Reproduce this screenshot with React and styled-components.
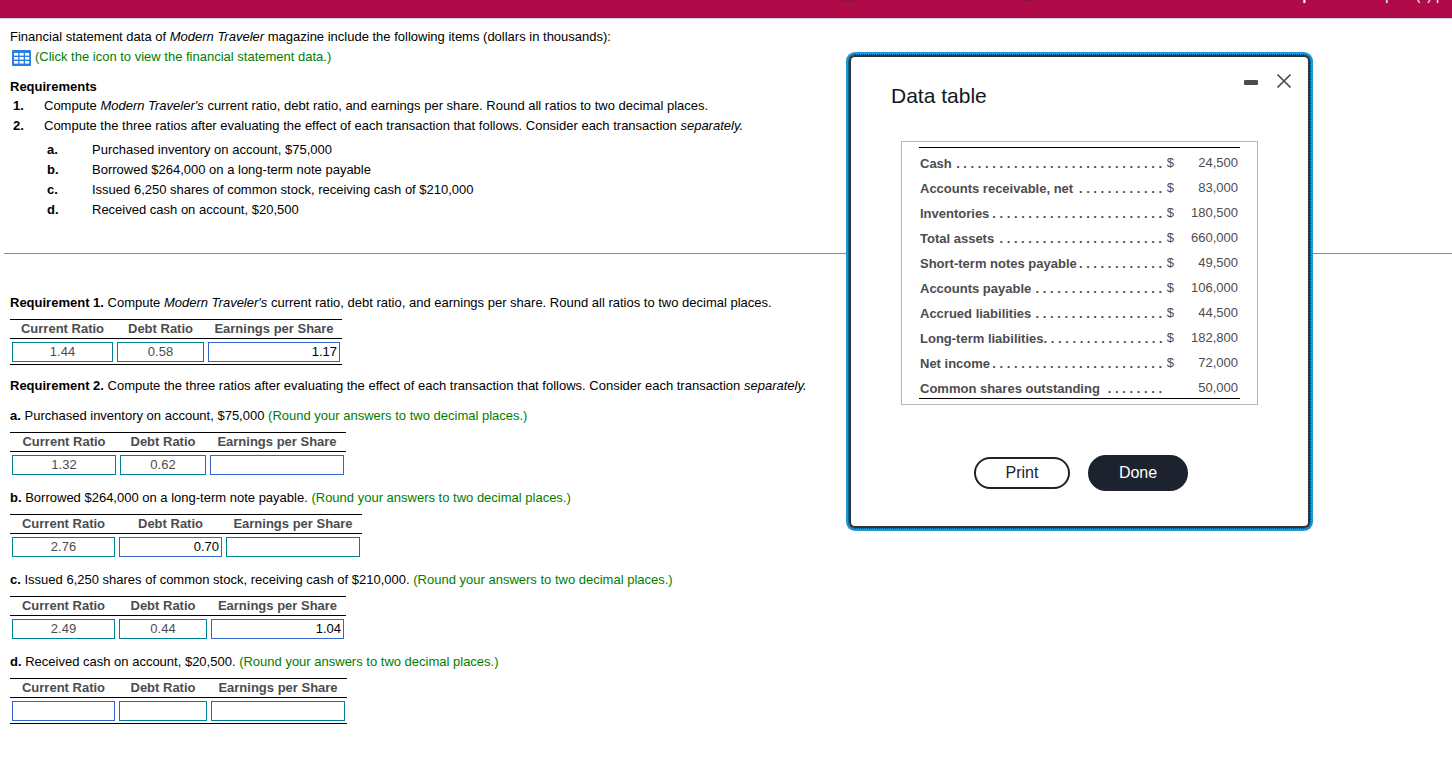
import React, { useState } from "react";
import styled, { createGlobalStyle } from "styled-components";

const GlobalStyle = createGlobalStyle`
  * {
    box-sizing: border-box;
  }

  body {
    margin: 0;
    background: #fff;
    color: #000;
    font-family: "Liberation Sans", Arial, sans-serif;
    font-size: 13px;
    line-height: 20px;
  }
`;

const transactions = [
  { letter: "a", text: "Purchased inventory on account, $75,000" },
  { letter: "b", text: "Borrowed $264,000 on a long-term note payable" },
  {
    letter: "c",
    text: "Issued 6,250 shares of common stock, receiving cash of $210,000",
  },
  { letter: "d", text: "Received cash on account, $20,500" },
];

const ratioNames = ["Current Ratio", "Debt Ratio", "Earnings per Share"];

const requirementOne = {
  columns: [105, 91, 136],
  values: ["1.44", "0.58", "1.17"],
  active: 2,
};

const answers = [
  {
    letter: "a",
    text: "Purchased inventory on account, $75,000",
    columns: [108, 90, 138],
    values: ["1.32", "0.62", ""],
    active: 2,
  },
  {
    letter: "b",
    text: "Borrowed $264,000 on a long-term note payable.",
    columns: [107, 107, 138],
    values: ["2.76", "0.70", ""],
    active: 1,
  },
  {
    letter: "c",
    text: "Issued 6,250 shares of common stock, receiving cash of $210,000.",
    columns: [107, 92, 137],
    values: ["2.49", "0.44", "1.04"],
    active: 2,
  },
  {
    letter: "d",
    text: "Received cash on account, $20,500.",
    columns: [107, 92, 138],
    values: ["", "", ""],
    active: 0,
    closed: true,
  },
];

// label, number of leader dots, sign, amount
const statement = [
  ["Cash", 29, "$", "24,500"],
  ["Accounts receivable, net", 12, "$", "83,000"],
  ["Inventories", 24, "$", "180,500"],
  ["Total assets", 23, "$", "660,000"],
  ["Short-term notes payable", 12, "$", "49,500"],
  ["Accounts payable", 18, "$", "106,000"],
  ["Accrued liabilities", 18, "$", "44,500"],
  ["Long-term liabilities", 17, "$", "182,800"],
  ["Net income", 24, "$", "72,000"],
  ["Common shares outstanding", 8, "", "50,000"],
];

const GridIcon = () => (
  <svg width="19" height="16" viewBox="0 0 19 16" aria-hidden="true">
    <rect width="19" height="16" rx="1" fill="#2a7de1" />
    <g fill="#fff">
      {[3, 7, 11].map((y) =>
        [2, 7.5, 13].map((x) => (
          <rect key={`${x}-${y}`} x={x} y={y} width="4.2" height="2.6" />
        ))
      )}
    </g>
  </svg>
);

const RatioTable = ({ name, columns, values, active, closed }) => (
  <Ratios $closed={closed}>
    <colgroup>
      {columns.map((width, i) => (
        <Column key={ratioNames[i]} $width={width} />
      ))}
    </colgroup>
    <thead>
      <tr>
        {ratioNames.map((ratio) => (
          <th key={ratio} scope="col">
            {ratio}
          </th>
        ))}
      </tr>
    </thead>
    <tbody>
      <tr>
        {values.map((value, i) => (
          <td key={ratioNames[i]}>
            <Answer
              type="text"
              aria-label={`${name} ${ratioNames[i]}`}
              defaultValue={value}
              $active={i === active}
            />
          </td>
        ))}
      </tr>
    </tbody>
  </Ratios>
);

const DataDialog = ({ onClose }) => (
  <Dialog role="dialog" aria-labelledby="data-title">
    <DialogHeader>
      <DialogTitle id="data-title">Data table</DialogTitle>
      <WindowButtons>
        <IconButton type="button" aria-label="Minimize">
          <svg width="14" height="16" viewBox="0 0 14 16">
            <rect y="7" width="14" height="5" rx="1" fill="#4c4c4f" />
          </svg>
        </IconButton>
        <IconButton type="button" aria-label="Close" onClick={onClose}>
          <svg width="16" height="16" viewBox="0 0 16 16">
            <path
              d="M1.5 1.5l13 13M14.5 1.5l-13 13"
              stroke="#414c5a"
              strokeWidth="1.7"
            />
          </svg>
        </IconButton>
      </WindowButtons>
    </DialogHeader>
    <StatementFrame>
      <Statement>
        <tbody>
          {statement.map(([label, dots, sign, amount]) => (
            <tr key={label}>
              <th scope="row">
                <Leader>
                  <span>{label}</span>
                  <span aria-hidden="true">{Array(dots).fill(".").join(" ")}</span>
                </Leader>
              </th>
              <SignCell>{sign}</SignCell>
              <AmountCell>{amount}</AmountCell>
            </tr>
          ))}
        </tbody>
      </Statement>
    </StatementFrame>
    <DialogFooter>
      <PrintButton type="button">Print</PrintButton>
      <DoneButton type="button" onClick={onClose}>
        Done
      </DoneButton>
    </DialogFooter>
  </Dialog>
);

const App = () => {
  const [open, setOpen] = useState(true);

  return (
    <>
      <GlobalStyle />
      <TopBar>
        <NavDot />
        <NavDot />
        <Points>
          <b>This question:</b>
          <span>1 point(s) possible</span>
        </Points>
      </TopBar>
      <Problem>
        <p>
          Financial statement data of <em>Modern Traveler</em> magazine include
          the following items (dollars in thousands):
        </p>
        <DataLink type="button" onClick={() => setOpen(true)}>
          <GridIcon />
          <span>(Click the icon to view the financial statement data.)</span>
        </DataLink>
        <Heading>Requirements</Heading>
        <Requirements>
          <li>
            <b>1.</b>
            <span>
              Compute <em>Modern Traveler's</em> current ratio, debt ratio, and
              earnings per share. Round all ratios to two decimal places.
            </span>
          </li>
          <li>
            <b>2.</b>
            <span>
              Compute the three ratios after evaluating the effect of each
              transaction that follows. Consider each transaction{" "}
              <em>separately.</em>
            </span>
          </li>
        </Requirements>
        <Transactions>
          {transactions.map(({ letter, text }) => (
            <li key={letter}>
              <b>{letter}.</b>
              <span>{text}</span>
            </li>
          ))}
        </Transactions>
      </Problem>
      <Divider />
      <Work>
        <Prompt>
          <b>Requirement 1.</b> Compute <em>Modern Traveler's</em> current
          ratio, debt ratio, and earnings per share. Round all ratios to two
          decimal places.
        </Prompt>
        <RatioTable name="Requirement 1" {...requirementOne} closed />
        <Prompt $spaced>
          <b>Requirement 2.</b> Compute the three ratios after evaluating the
          effect of each transaction that follows. Consider each transaction{" "}
          <em>separately.</em>
        </Prompt>
        {answers.map(({ letter, text, ...table }) => (
          <React.Fragment key={letter}>
            <Prompt>
              <b>{letter}.</b> {text}{" "}
              <Hint>(Round your answers to two decimal places.)</Hint>
            </Prompt>
            <RatioTable name={`Transaction ${letter}`} {...table} />
          </React.Fragment>
        ))}
      </Work>
      {open && <DataDialog onClose={() => setOpen(false)} />}
    </>
  );
};

const TopBar = styled.header`
  display: flex;
  justify-content: flex-end;
  height: 19px;
  overflow: hidden;
  background: #b00a48;
  border-bottom: 1px solid #c9ccd6;
`;

const NavDot = styled.span`
  width: 28px;
  height: 28px;
  margin-top: -26px;
  margin-right: 152px;
  border-radius: 50%;
  background: #8d1240;
`;

const Points = styled.div`
  display: flex;
  gap: 13px;
  width: 187px;
  margin-top: -15px;
  margin-left: 71px;
  color: #fff;
  font-size: 14px;
  line-height: 20px;
  white-space: nowrap;
`;

const Problem = styled.section`
  padding: 8px 10px 0;

  p {
    margin: 0;
  }
`;

const DataLink = styled.button`
  display: flex;
  align-items: flex-start;
  gap: 4px;
  padding: 0 0 0 2px;
  border: 0;
  background: none;
  color: #007d00;
  font: inherit;
  cursor: pointer;

  svg {
    margin-top: 3px;
  }
`;

const Heading = styled.h2`
  margin: 10px 0 0;
  font-size: 13px;
  line-height: 19px;
`;

const Requirements = styled.ol`
  margin: 0;
  padding: 0 0 0 3px;
  list-style: none;

  li {
    display: grid;
    grid-template-columns: 31px 1fr;
  }
`;

const Transactions = styled(Requirements)`
  margin-top: 4px;
  padding-left: 37px;

  li {
    grid-template-columns: 45px 1fr;
  }
`;

const Divider = styled.hr`
  height: 1px;
  margin: 33px 0 39px 4px;
  border: 0;
  background: #858b96;
`;

const Work = styled.main`
  padding: 0 10px 32px;
`;

const Prompt = styled.p`
  margin: 0 0 ${(props) => (props.$spaced ? "10px" : "6px")};
`;

const Hint = styled.span`
  color: #007d00;
`;

const Ratios = styled.table`
  table-layout: fixed;
  width: min-content;
  margin-bottom: 11px;
  border-collapse: collapse;
  border-top: 1px solid #000;
  border-bottom: ${(props) => (props.$closed ? "1px solid #000" : "0")};
  color: #4c4c4f;

  th {
    height: 19px;
    padding: 0;
    border-bottom: 1px solid #000;
    line-height: 18px;
    white-space: nowrap;
  }

  td {
    padding: 3px 2px 2px;
  }
`;

const Column = styled.col`
  width: ${(props) => props.$width}px;
`;

const Answer = styled.input`
  display: block;
  width: 100%;
  height: 20px;
  padding: 0 2px 1px;
  border: 1px solid ${(props) => (props.$active ? "#3366cc" : "#007f99")};
  background: #fff;
  color: ${(props) => (props.$active ? "#000" : "#4c4c4f")};
  font: inherit;
  text-align: ${(props) => (props.$active ? "right" : "center")};
`;

const Dialog = styled.section`
  position: absolute;
  top: 55px;
  right: 142px;
  width: 461px;
  padding: 16px 16px 35px 40px;
  border: 2px solid #303236;
  border-radius: 6px;
  outline: 1px dotted #303236;
  background: #fff;
  box-shadow: 0 0 0 3px #1d97d8;
`;

const DialogHeader = styled.header`
  display: flex;
  justify-content: space-between;
  align-items: flex-start;
`;

const DialogTitle = styled.h1`
  margin: 8px 0 0;
  color: #101820;
  font-size: 21px;
  font-weight: 400;
  line-height: 30px;
`;

const WindowButtons = styled.div`
  display: flex;
  gap: 18px;
`;

const IconButton = styled.button`
  display: flex;
  padding: 0;
  border: 0;
  background: none;
  cursor: pointer;
`;

const StatementFrame = styled.div`
  width: 357px;
  margin: 30px 0 0 10px;
  padding: 5px 17px;
  border: 1px solid #b5b5b5;
`;

const Statement = styled.table`
  table-layout: fixed;
  width: 100%;
  border-collapse: collapse;
  border-top: 1px solid #000;
  border-bottom: 1px solid #000;
  color: #4c4c4f;

  th,
  td {
    height: 25px;
    padding: 6px 0 0 1px;
    line-height: 19px;
  }

  td {
    padding: 4px 2px 0 1px;
    line-height: 21px;
  }
`;

const Leader = styled.span`
  display: flex;
  justify-content: space-between;
  white-space: nowrap;
`;

const SignCell = styled.td`
  width: 14px;
  text-align: right;
`;

const AmountCell = styled.td`
  width: 64px;
  text-align: right;
`;

const DialogFooter = styled.footer`
  display: flex;
  align-items: center;
  gap: 18px;
  margin: 50px 0 0 83px;
`;

const PillButton = styled.button`
  border: 2px solid #1c222e;
  border-radius: 18px;
  font-family: inherit;
  font-size: 16px;
  cursor: pointer;
`;

const PrintButton = styled(PillButton)`
  width: 96px;
  height: 32px;
  background: #fff;
  color: #1c222e;
`;

const DoneButton = styled(PillButton)`
  width: 100px;
  height: 36px;
  background: #1c222e;
  color: #fff;
`;

export default App;
